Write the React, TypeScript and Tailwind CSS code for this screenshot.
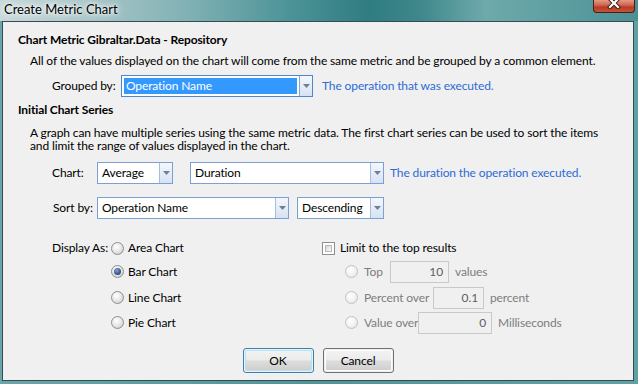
import React from "react";

const FONT = "font-['Lato',sans-serif]";

function DropBtn({ focused }: { focused?: boolean }) {
  return (
    <div
      className={`w-[13px] h-full flex items-center justify-center border-l ${
        focused ? "border-[#7fa6d6]" : "border-[#a4bde0]"
      } bg-[linear-gradient(to_bottom,#f4f7fc_0%,#e6edf8_50%,#d6e2f3_100%)]`}
    >
      <svg width="7" height="4" viewBox="0 0 7 4">
        <path d="M0 0 L7 0 L3.5 4 Z" fill="#6f7f95" />
      </svg>
    </div>
  );
}

function Combo({
  className,
  text,
  focused,
}: {
  className: string;
  text: string;
  focused?: boolean;
}) {
  return (
    <div
      className={`flex h-[22px] shrink-0 border bg-white ${
        focused ? "border-[#4f86cc]" : "border-[#7d9fd6]"
      } ${className}`}
    >
      <div className="flex-1 p-[1px] flex">
        {focused ? (
          <div className="flex-1 bg-[#3399ff] text-white flex items-center pl-[2px] border border-white">
            {text}
          </div>
        ) : (
          <div className="flex-1 flex items-center pl-[3px] text-black">{text}</div>
        )}
      </div>
      <DropBtn focused={focused} />
    </div>
  );
}

function Radio({ checked, disabled }: { checked?: boolean; disabled?: boolean }) {
  return (
    <span
      className={`w-[13px] h-[13px] shrink-0 rounded-full border flex items-center justify-center ${
        disabled
          ? "border-[#c2c2c2] bg-[radial-gradient(circle_at_40%_35%,#ffffff_0%,#f1f1f1_55%,#dcdcdc_100%)]"
          : "border-[#8e8f8f] bg-[radial-gradient(circle_at_40%_35%,#ffffff_0%,#e4e4e4_55%,#bdbdbd_100%)]"
      }`}
    >
      {checked && (
        <span className="w-[7px] h-[7px] rounded-full bg-[radial-gradient(circle_at_40%_35%,#8aa6d0_0%,#3a5b8e_55%,#1e3a66_100%)]" />
      )}
    </span>
  );
}

function Checkbox() {
  return (
    <span className="w-[13px] h-[13px] shrink-0 border border-[#8e8f8f] bg-white p-[2px] flex">
      <span className="flex-1 border border-[#b7b7b7] bg-[linear-gradient(135deg,#d4d4d4_0%,#eeeeee_60%,#fafafa_100%)]" />
    </span>
  );
}

function NumBox({ className, value }: { className: string; value: string }) {
  return (
    <div
      className={`h-[22px] shrink-0 border border-[#c9c9c9] bg-[#f0f0f0] flex items-center justify-end pr-[5px] text-[#5e5e5e] ${className}`}
    >
      {value}
    </div>
  );
}

function Button({ label, def }: { label: string; def?: boolean }) {
  return (
    <div
      className={`w-[71px] h-[25px] rounded-[3px] border ${
        def ? "border-[#3c7fb1]" : "border-[#707070]"
      } p-[1px]`}
    >
      <div
        className={`w-full h-full rounded-[2px] border ${
          def ? "border-[#b4e3f7]" : "border-[#fbfbfb]"
        } bg-[linear-gradient(to_bottom,#f2f2f2_0%,#ebebeb_48%,#dddddd_52%,#cfcfcf_100%)] flex items-center justify-center text-black`}
      >
        {label}
      </div>
    </div>
  );
}

export default function App() {
  return (
    <div
      className={`w-[638px] h-[384px] overflow-hidden flex flex-col whitespace-nowrap tracking-[-0.12px] bg-[linear-gradient(to_right,#6aa6a9_0%,#4f9598_50%,#5ea2a5_100%)] text-[12px] ${FONT}`}
    >
      {/* Title bar */}
      <div className="h-[21px] shrink-0 flex items-start justify-between bg-[linear-gradient(to_right,#c9d9da_0%,#a9c6c8_14%,#7fb0b3_30%,#4d9498_45%,#2f7c81_58%,#3f888c_66%,#6ea9ab_76%,#5d9ea1_88%,#4b9094_100%)]">
        <div className="pl-[4px] pt-[2px] text-[13px] leading-[14px] tracking-normal text-black [text-shadow:0_0_6px_#ffffff,0_0_10px_#ffffff,0_0_3px_#ffffff]">
          Create Metric Chart
        </div>
        <div className="mr-[3px] w-[42px] h-[13px] rounded-b-[4px] border border-t-0 border-[#4a1c12] bg-[linear-gradient(to_bottom,#e49a86_0%,#cf6a52_40%,#b83c22_60%,#c4553a_100%)] flex items-start justify-center overflow-hidden">
          <svg width="14" height="11" viewBox="0 0 14 11" className="-mt-[2px]">
            <path d="M3 1 L11 9 M11 1 L3 9" stroke="#3a1a12" strokeWidth="4" strokeLinecap="square" />
            <path d="M3 1 L11 9 M11 1 L3 9" stroke="#ffffff" strokeWidth="2.2" strokeLinecap="square" />
          </svg>
        </div>
      </div>

      {/* Client area */}
      <div className="flex-1 ml-[2px] mr-[4px] mb-[3px] border border-[#3a4a52] bg-[#f0f0f0] flex flex-col pl-[15px] text-black">
        <div className="mt-[10px] h-[16px] flex items-center font-bold">
          Chart Metric Gibraltar.Data - Repository
        </div>
        <div className="mt-[5px] h-[16px] flex items-center ml-[12px]">
          All of the values displayed on the chart will come from the same metric and be grouped by a common element.
        </div>
        <div className="mt-[6px] h-[22px] flex items-center">
          <span className="ml-[34px] w-[69px] shrink-0">Grouped by:</span>
          <Combo className="w-[192px]" text="Operation Name" focused />
          <span className="ml-[9px] text-[#2e6bd6]">The operation that was executed.</span>
        </div>
        <div className="mt-[5px] h-[16px] flex items-center font-bold">Initial Chart Series</div>
        <div className="mt-[8px] ml-[12px] flex flex-col">
          <div className="h-[13px] leading-[13px]">
            A graph can have multiple series using the same metric data. The first chart series can be used to sort the items
          </div>
          <div className="h-[13px] leading-[13px]">and limit the range of values displayed in the chart.</div>
        </div>
        <div className="mt-[10px] h-[22px] flex items-center">
          <span className="ml-[34px] w-[45px] shrink-0">Chart:</span>
          <Combo className="w-[76px]" text="Average" />
          <Combo className="ml-[17px] w-[194px]" text="Duration" />
          <span className="ml-[6px] text-[#2e6bd6]">The duration the operation executed.</span>
        </div>
        <div className="mt-[13px] h-[22px] flex items-center">
          <span className="ml-[35px] w-[44px] shrink-0">Sort by:</span>
          <Combo className="w-[192px]" text="Operation Name" />
          <Combo className="ml-[8px] w-[87px]" text="Descending" />
        </div>

        {/* Display As block */}
        <div className="mt-[18px] h-[22px] flex items-center pl-[34px]">
          <div className="w-[270px] shrink-0 flex items-center">
            <span className="w-[59px] shrink-0">Display As:</span>
            <Radio />
            <span className="ml-[4px]">Area Chart</span>
          </div>
          <div className="flex items-center">
            <Checkbox />
            <span className="ml-[5px]">Limit to the top results</span>
          </div>
        </div>
        <div className="mt-[1px] h-[23px] flex items-center pl-[34px]">
          <div className="w-[270px] shrink-0 flex items-center">
            <span className="w-[59px] shrink-0" />
            <Radio checked />
            <span className="ml-[4px]">Bar Chart</span>
          </div>
          <div className="flex items-center pl-[23px] text-[#7d7d7d]">
            <Radio disabled />
            <span className="ml-[6px] w-[26px] shrink-0">Top</span>
            <NumBox className="w-[59px]" value="10" />
            <span className="ml-[6px]">values</span>
          </div>
        </div>
        <div className="mt-[3px] h-[23px] flex items-center pl-[34px]">
          <div className="w-[270px] shrink-0 flex items-center">
            <span className="w-[59px] shrink-0" />
            <Radio />
            <span className="ml-[4px]">Line Chart</span>
          </div>
          <div className="flex items-center pl-[23px] text-[#7d7d7d]">
            <Radio disabled />
            <span className="ml-[6px] w-[69px] shrink-0">Percent over</span>
            <NumBox className="w-[51px]" value="0.1" />
            <span className="ml-[6px]">percent</span>
          </div>
        </div>
        <div className="mt-[2px] h-[23px] flex items-center pl-[34px]">
          <div className="w-[270px] shrink-0 flex items-center">
            <span className="w-[59px] shrink-0" />
            <Radio />
            <span className="ml-[4px]">Pie Chart</span>
          </div>
          <div className="flex items-center pl-[23px] text-[#7d7d7d]">
            <Radio disabled />
            <span className="ml-[6px] w-[54px] shrink-0">Value over</span>
            <NumBox className="w-[74px]" value="0" />
            <span className="ml-[6px]">Milliseconds</span>
          </div>
        </div>

        <div className="mt-[14px] flex justify-center gap-[9px] pr-[15px]">
          <Button label="OK" def />
          <Button label="Cancel" />
        </div>
      </div>
    </div>
  );
}
